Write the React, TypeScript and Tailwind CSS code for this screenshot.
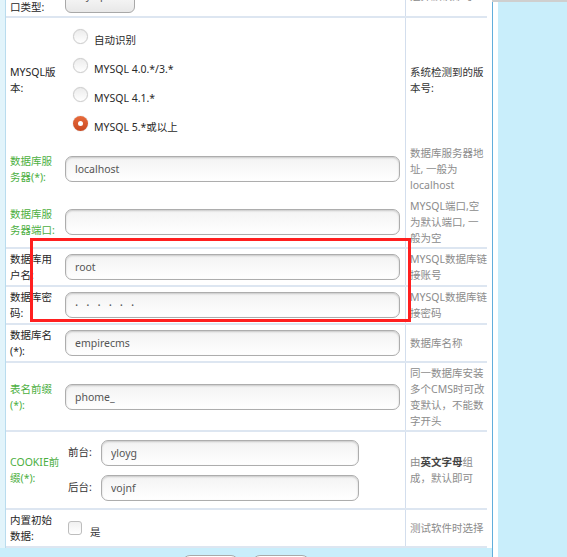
import type { ReactNode } from 'react'

const green = 'text-[#4caf3f]'
const dark = 'text-[#262626]'

function Lines({ lines }: { lines: string[] }) {
  return (
    <div className="leading-[16px]">
      {lines.map((l, i) => (
        <div key={i} className="whitespace-nowrap">
          {l}
        </div>
      ))}
    </div>
  )
}

function Row({
  label,
  labelColor = dark,
  note,
  noteColor = 'text-[#8c8c8c]',
  height,
  border = true,
  children,
}: {
  label: string[]
  labelColor?: string
  note: ReactNode
  noteColor?: string
  height: string
  border?: boolean
  children: ReactNode
}) {
  return (
    <div
      className={`grid grid-cols-[56px_343px_82px] ${height} ${
        border ? 'border-b-2 border-[#dde6f1]' : ''
      }`}
    >
      <div className={`flex items-center pl-[4px] ${labelColor}`}>
        <Lines lines={label} />
      </div>
      <div className="flex items-center">{children}</div>
      <div className={`flex items-center border-l border-[#d3deed] pl-[4px] ${noteColor}`}>{note}</div>
    </div>
  )
}

function TextBox({ value, width = 'w-[335px]', className = '' }: { value: string; width?: string; className?: string }) {
  return (
    <input
      readOnly
      defaultValue={value}
      className={`${width} h-[26px] rounded-[7px] border border-[#adadad] bg-linear-to-b from-[#f3f3f3] to-white px-[9px] text-[10.5px] text-[#555] shadow-[inset_0_1px_2px_rgba(0,0,0,0.18)] outline-none ${className}`}
    />
  )
}

function Radio({ label, checked = false }: { label: string; checked?: boolean }) {
  return (
    <div className="flex h-[29px] items-center">
      {checked ? (
        <span className="flex h-[15px] w-[15px] items-center justify-center rounded-full bg-linear-to-b from-[#e86b3c] to-[#c9481f] shadow-[0_0_1px_rgba(0,0,0,0.4)]">
          <span className="h-[5px] w-[5px] rounded-full bg-white" />
        </span>
      ) : (
        <span className="h-[15px] w-[15px] rounded-full border border-[#cbcbcb] bg-linear-to-b from-[#ececec] to-white shadow-[0_0_1px_rgba(0,0,0,0.15)]" />
      )}
      <span className="pl-[6px] pt-[9px] text-[#2a2a2a]">{label}</span>
    </div>
  )
}

const versions = ['自动识别', 'MYSQL 4.0.*/3.*', 'MYSQL 4.1.*', 'MYSQL 5.*或以上']

export default function App() {
  return (
    <div className="relative flex h-[557px] flex-col overflow-hidden bg-[#c9eefb] font-['Noto_Sans','Noto_Sans_CJK_SC',sans-serif] text-[10.5px]">
      <div className="h-[2px] shrink-0 bg-[#cfcfcf]" />
      <div className="flex flex-1">
        <div className="w-[493px] border-r border-[#62aedb]">
          <div className="mt-[-20px] border-l-[5px] border-[#e2f4fb] bg-white pr-[5px]">
            <div className="border-l border-[#b9dcee]">
              <Row
                label={['数据库接', '口类型:']}
                note={
                  <div className="pb-[7px]">
                    <Lines lines={['选择默认即可']} />
                  </div>
                }
                height="h-[36px]"
              >
                <div className="ml-[3px] flex h-[27px] w-[70px] items-center rounded-[6px] border border-[#a8a8a8] bg-linear-to-b from-white to-[#e8e8e8] pb-[7px] pl-[10px] text-[#555]">
                  mysql
                </div>
              </Row>

              <Row
                label={['MYSQL版', '本:']}
                note={<Lines lines={['系统检测到的版', '本号:']} />}
                noteColor="text-[#333]"
                height="h-[124px]"
                border={false}
              >
                <div className="pl-[11px]">
                  {versions.map((v, i) => (
                    <Radio key={v} label={v} checked={i === 3} />
                  ))}
                </div>
              </Row>

              <Row
                label={['数据库服', '务器(*):']}
                labelColor={green}
                note={<Lines lines={['数据库服务器地', '址, 一般为', 'localhost']} />}
                height="h-[54px]"
                border={false}
              >
                <TextBox value="localhost" className="ml-[3px]" />
              </Row>

              <Row
                label={['数据库服', '务器端口:']}
                labelColor={green}
                note={<Lines lines={['MYSQL端口,空', '为默认端口, 一', '般为空']} />}
                height="h-[53px]"
              >
                <TextBox value="" className="ml-[3px]" />
              </Row>

              <Row label={['数据库用', '户名:']} note={<Lines lines={['MYSQL数据库链', '接账号']} />} height="h-[38px]">
                <TextBox value="root" className="ml-[3px]" />
              </Row>

              <Row label={['数据库密', '码:']} note={<Lines lines={['MYSQL数据库链', '接密码']} />} height="h-[38px]">
                <TextBox value="······" className="ml-[3px] tracking-[8px] text-[12px]" />
              </Row>

              <Row label={['数据库名', '(*):']} note={<Lines lines={['数据库名称']} />} height="h-[38px]">
                <TextBox value="empirecms" className="ml-[3px]" />
              </Row>

              <Row
                label={['表名前缀', '(*):']}
                labelColor={green}
                note={<Lines lines={['同一数据库安装', '多个CMS时可改', '变默认，不能数', '字开头']} />}
                height="h-[69px]"
              >
                <TextBox value="phome_" className="ml-[3px]" />
              </Row>

              <Row
                label={['COOKIE前', '缀(*):']}
                labelColor={green}
                note={
                  <div className="leading-[16px]">
                    <div className="whitespace-nowrap">
                      由<b className="text-[#444]">英文字母</b>组
                    </div>
                    <div className="whitespace-nowrap">成，默认即可</div>
                  </div>
                }
                height="h-[78px]"
              >
                <div className="flex flex-col gap-[9px] pl-[6px] text-[#333]">
                  <div className="flex items-center">
                    <span className="w-[33px]">前台:</span>
                    <TextBox value="yloyg" width="w-[258px]" />
                  </div>
                  <div className="flex items-center">
                    <span className="w-[33px]">后台:</span>
                    <TextBox value="vojnf" width="w-[258px]" />
                  </div>
                </div>
              </Row>

              <Row label={['内置初始', '数据:']} note={<Lines lines={['测试软件时选择']} />} height="h-[38px]">
                <div className="flex items-center pl-[6px]">
                  <span className="h-[14px] w-[14px] rounded-[3px] border border-[#bdbdbd] bg-linear-to-b from-[#f0f0f0] to-white" />
                  <span className="pl-[8px] pt-[9px] text-[#333]">是</span>
                </div>
              </Row>
            </div>
          </div>

          <div className="flex justify-center gap-[13px] pt-[7px]">
            <button className="h-[24px] w-[57px] rounded-[8px] border border-[#a9a9a9] bg-linear-to-b from-white to-[#e6e6e6] text-[#333]">
              上一步
            </button>
            <button className="h-[24px] w-[58px] rounded-[8px] border border-[#a9a9a9] bg-linear-to-b from-white to-[#e6e6e6] text-[#333]">
              下一步
            </button>
          </div>
        </div>
        <div className="w-[5px] bg-white" />
        <div className="flex-1" />
      </div>

      <div className="pointer-events-none absolute left-[30px] top-[238px] h-[84px] w-[381px] border-[3px] border-[#ff1f1f]" />
    </div>
  )
}
